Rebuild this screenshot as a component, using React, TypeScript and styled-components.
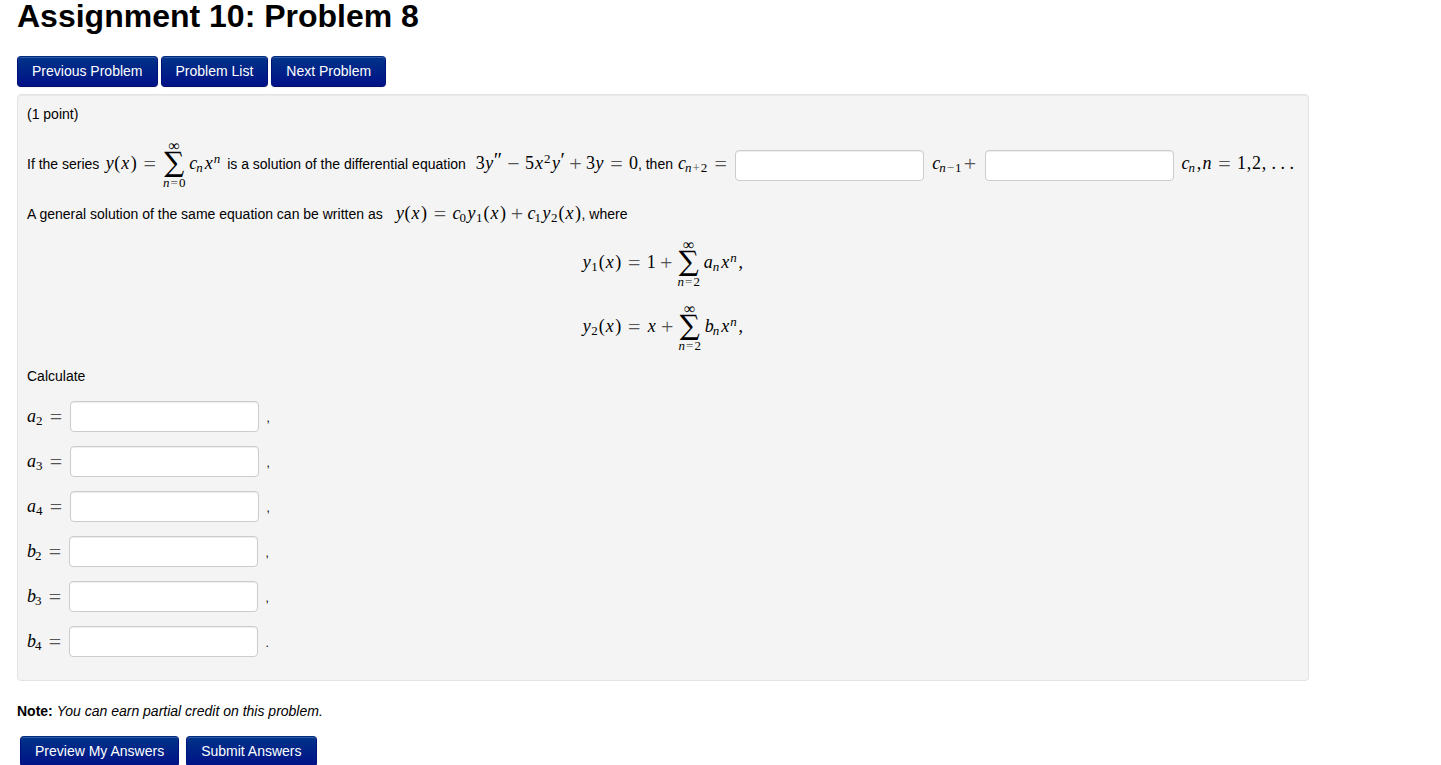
import React from "react";
import styled, { createGlobalStyle } from "styled-components";

const GlobalStyle = createGlobalStyle`
  * { box-sizing: border-box; }
  body {
    margin: 0;
    background: #fff;
    color: #000;
    font: 14px/20px "Liberation Sans", Arial, sans-serif;
  }
`;

const Page = styled.main`
  padding: 0 132px 16px 17px;
`;

const Title = styled.h1`
  margin: 0;
  padding-bottom: 24px;
  font-size: 32px;
  line-height: 32px;
  font-weight: 700;
`;

const ButtonBar = styled.nav`
  display: flex;
  gap: 3px;
`;

const SubmitBar = styled.div`
  display: flex;
  gap: 7px;
  padding: 15px 3px 0;
`;

const Button = styled.button`
  height: 31px;
  padding: 0 14px 1px;
  border: 1px solid;
  border-color: #002a80 #00137a #000c6b;
  border-radius: 4px;
  background: linear-gradient(#003388, #001188);
  box-shadow: inset 0 1px 0 rgba(255, 255, 255, 0.2), 0 1px 2px rgba(0, 0, 0, 0.05);
  color: #fff;
  font: inherit;
  white-space: nowrap;
`;

const Panel = styled.section`
  margin-top: 7px;
  padding: 9px;
  border: 1px solid #e3e3e3;
  border-radius: 4px;
  background: #f4f4f4;
  box-shadow: inset 0 1px 1px rgba(0, 0, 0, 0.05);
`;

const Points = styled.p`
  margin: 0 0 17px;
`;

const Statement = styled.p<{ $gap: number }>`
  margin: 0 0 ${(p) => p.$gap}px;
`;

const Caption = styled.p`
  margin: 0 0 15px;
`;

const Math = styled.span<{ $before?: number; $after?: number }>`
  display: inline-block;
  margin: 0 ${(p) => p.$after ?? 0}px 0 ${(p) => p.$before ?? 0}px;
  font-family: "Liberation Serif", "Times New Roman", serif;
  font-size: 18px;
  white-space: nowrap;
`;

const Glyph = styled.span<{ $w: number; $italic?: boolean }>`
  display: inline-block;
  width: ${(p) => p.$w}px;
  font-style: ${(p) => (p.$italic ? "italic" : "normal")};
  text-align: center;
`;

const Operator = styled.span<{ $gap: number }>`
  display: inline-block;
  width: 13px;
  margin: 0 ${(p) => p.$gap}px;
  color: #555;
  font-size: 22px;
  line-height: 12px;
  text-align: center;
  vertical-align: -2px;
`;

const Script = styled.span<{ $raise?: boolean }>`
  display: inline-block;
  padding-right: 1px;
  font-size: 13px;
  line-height: 10px;
  vertical-align: ${(p) => (p.$raise ? "6px" : "-3px")};
`;

const ScriptOperator = styled.span`
  margin: 0 1px;
  color: #555;
`;

const Prime = styled.span`
  display: inline-block;
  font-size: 20px;
  line-height: 10px;
  vertical-align: 2px;
`;

const SumStack = styled.span`
  display: inline-flex;
  flex-direction: column;
  align-items: center;
  width: 24px;
  margin-right: 3px;
  vertical-align: middle;
`;

const Limit = styled.span`
  font-size: 13px;
  line-height: 12px;
`;

const Infinity = styled.span`
  font-size: 16px;
  line-height: 10px;
`;

const Sigma = styled.span`
  font-family: "DejaVu Math TeX Gyre", "Liberation Serif", serif;
  font-size: 24px;
  line-height: 26px;
`;

const Answer = styled.input`
  width: 189px;
  height: 31px;
  margin: 0;
  padding: 4px 6px;
  border: 1px solid #ccc;
  border-radius: 4px;
  background: #fff;
  box-shadow: inset 0 1px 1px rgba(0, 0, 0, 0.075);
  font: inherit;
  vertical-align: middle;
`;

const Display = styled.div`
  display: grid;
  justify-content: center;
  margin-bottom: 6px;
`;

const DisplayRow = styled.div`
  display: flex;
  align-items: center;
  height: 64px;
`;

const AnswerRow = styled.div`
  display: flex;
  align-items: center;
  height: 31px;
  margin-bottom: 14px;
`;

const AnswerLabel = styled.label`
  display: block;
  margin-right: 1px;
`;

const Mark = styled.span`
  padding: 3px 0 0 8px;
  font-size: 12px;
`;

const Note = styled.p`
  margin: 20px 0 0;
`;

const widths: Record<string, number> = {
  a: 9, b: 8, c: 7, n: 10, x: 10, y: 9, "(": 6, ")": 7, ",": 6,
};

const Chars = ({ children }: { children: string }) => (
  <>
    {children.split("").map((ch, i) => (
      <Glyph key={i} $w={widths[ch] ?? 9} $italic={/[a-z]/.test(ch)}>
        {ch}
      </Glyph>
    ))}
  </>
);

const Eq = () => <Operator $gap={6}>=</Operator>;
const Plus = () => <Operator $gap={4}>+</Operator>;
const Minus = () => <Operator $gap={5}>−</Operator>;

const Sum = ({ from }: { from: number }) => (
  <SumStack>
    <Infinity>∞</Infinity>
    <Sigma>∑</Sigma>
    <Limit><i>n</i><ScriptOperator>=</ScriptOperator>{from}</Limit>
  </SumStack>
);

const Sub = ({ children }: { children: React.ReactNode }) => <Script>{children}</Script>;
const Sup = ({ children }: { children: React.ReactNode }) => <Script $raise>{children}</Script>;

const unknowns = [
  { name: "a", index: 2, mark: "," },
  { name: "a", index: 3, mark: "," },
  { name: "a", index: 4, mark: "," },
  { name: "b", index: 2, mark: "," },
  { name: "b", index: 3, mark: "," },
  { name: "b", index: 4, mark: "." },
];

export default function App() {
  return (
    <Page>
      <GlobalStyle />
      <Title>Assignment 10: Problem 8</Title>
      <ButtonBar>
        <Button type="button">Previous Problem</Button>
        <Button type="button">Problem List</Button>
        <Button type="button">Next Problem</Button>
      </ButtonBar>

      <Panel>
        <Points>(1 point)</Points>
        <Statement $gap={14}>
          If the series{" "}
          <Math $before={2} $after={2}>
            <Chars>y(x)</Chars><Eq /><Sum from={0} />
            <Chars>c</Chars><Sub><i>n</i></Sub><Chars>x</Chars><Sup><i>n</i></Sup>
          </Math>{" "}
          is a solution of the differential equation{" "}
          <Math $before={6}>
            <Chars>3y</Chars><Prime>″</Prime><Minus />
            <Chars>5x</Chars><Sup>2</Sup><Chars>y</Chars><Prime>′</Prime><Plus />
            <Chars>3y</Chars><Eq /><Chars>0</Chars>
          </Math>
          , then{" "}
          <Math $before={1} $after={2}>
            <Chars>c</Chars><Sub><i>n</i><ScriptOperator>+</ScriptOperator>2</Sub><Eq />
          </Math>
          <Answer aria-label="Coefficient of c n-1" />
          <Math $before={8} $after={7}>
            <Chars>c</Chars><Sub><i>n</i><ScriptOperator>−</ScriptOperator>1</Sub>
            <Operator $gap={1}>+</Operator>
          </Math>
          <Answer aria-label="Coefficient of c n" />
          <Math $before={8}>
            <Chars>c</Chars><Sub><i>n</i></Sub><Chars>,n</Chars><Eq />
            <Chars>1,2,</Chars> . . .
          </Math>
        </Statement>
        <Statement $gap={8}>
          A general solution of the same equation can be written as{" "}
          <Math $before={9}>
            <Chars>y(x)</Chars><Eq />
            <Chars>c</Chars><Sub>0</Sub><Chars>y</Chars><Sub>1</Sub><Chars>(x)</Chars><Plus />
            <Chars>c</Chars><Sub>1</Sub><Chars>y</Chars><Sub>2</Sub><Chars>(x)</Chars>
          </Math>
          , where
        </Statement>
        <Display>
          <DisplayRow>
            <Math>
              <Chars>y</Chars><Sub>1</Sub><Chars>(x)</Chars><Eq /><Chars>1</Chars><Plus />
              <Sum from={2} />
              <Chars>a</Chars><Sub><i>n</i></Sub><Chars>x</Chars><Sup><i>n</i></Sup><Chars>,</Chars>
            </Math>
          </DisplayRow>
          <DisplayRow>
            <Math>
              <Chars>y</Chars><Sub>2</Sub><Chars>(x)</Chars><Eq /><Chars>x</Chars><Plus />
              <Sum from={2} />
              <Chars>b</Chars><Sub><i>n</i></Sub><Chars>x</Chars><Sup><i>n</i></Sup><Chars>,</Chars>
            </Math>
          </DisplayRow>
        </Display>
        <Caption>Calculate</Caption>
        {unknowns.map(({ name, index, mark }) => (
          <AnswerRow key={name + index}>
            <AnswerLabel htmlFor={name + index}>
              <Math><Chars>{name}</Chars><Sub>{index}</Sub><Eq /></Math>
            </AnswerLabel>
            <Answer id={name + index} />
            <Mark>{mark}</Mark>
          </AnswerRow>
        ))}
      </Panel>

      <Note>
        <b>Note:</b> <i>You can earn partial credit on this problem.</i>
      </Note>
      <SubmitBar>
        <Button type="submit">Preview My Answers</Button>
        <Button type="submit">Submit Answers</Button>
      </SubmitBar>
    </Page>
  );
}
